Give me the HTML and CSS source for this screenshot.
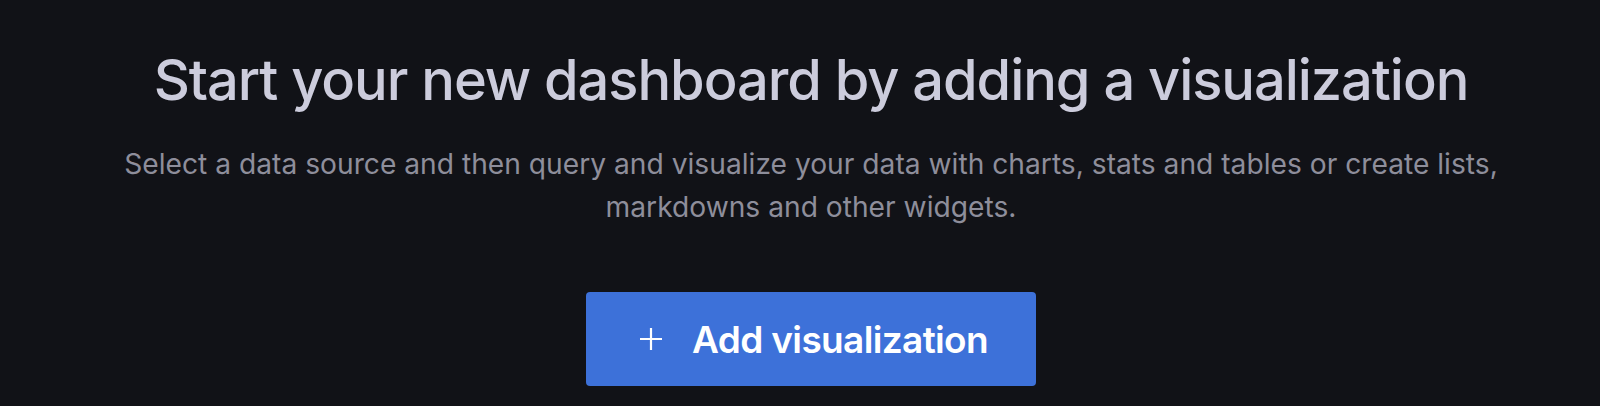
FILE: index.html
```html
<!DOCTYPE html>
<html lang="en">
<head>
  <meta charset="UTF-8" />
  <meta name="viewport" content="width=device-width, initial-scale=1.0"/>
  <title>New dashboard</title>
  <link rel="stylesheet" href="styles.css">
</head>
<body>

  <div class="empty-state">
    <h1 class="empty-title">Start your new dashboard by adding a visualization</h1>
    <p class="empty-text">Select a data source and then query and visualize your data with charts, stats and tables or create lists, markdowns and other widgets.</p>
    <button class="add-btn">
      <svg class="plus" viewBox="0 0 24 24" width="24" height="24">
        <path d="M12 1v22M1 12h22" stroke="currentColor" stroke-width="2.2" fill="none"/>
      </svg>
      <span>Add visualization</span>
    </button>
  </div>

</body>
</html>
```

FILE: styles.css
```css
body {
  margin: 0;
  background: #111217;
  font-family: Inter, "Noto Sans", sans-serif;
  height: 406px;
  overflow: hidden;
}

.empty-state {
  display: flex;
  flex-direction: column;
  align-items: center;
  padding: 40px 0 0 22px;
  text-align: center;
}

.empty-title {
  margin: 0;
  font-size: 56px;
  font-weight: 500;
  line-height: 80px;
  letter-spacing: -1.05px;
  color: #ccccdc;
}

.empty-text {
  margin: 23px 0 0;
  max-width: 1400px;
  font-size: 28.2px;
  line-height: 42.5px;
  color: #8e8e9b;
}

.add-btn {
  margin-top: 64px;
  display: flex;
  align-items: center;
  gap: 29px;
  height: 94px;
  padding: 0 48px 0 53px;
  border: none;
  border-radius: 4px;
  background: #3d71d9;
  color: #fff;
  font-family: inherit;
  font-size: 37px;
  font-weight: 600;
  letter-spacing: -0.65px;
}

.plus {
  display: block;
}
```
